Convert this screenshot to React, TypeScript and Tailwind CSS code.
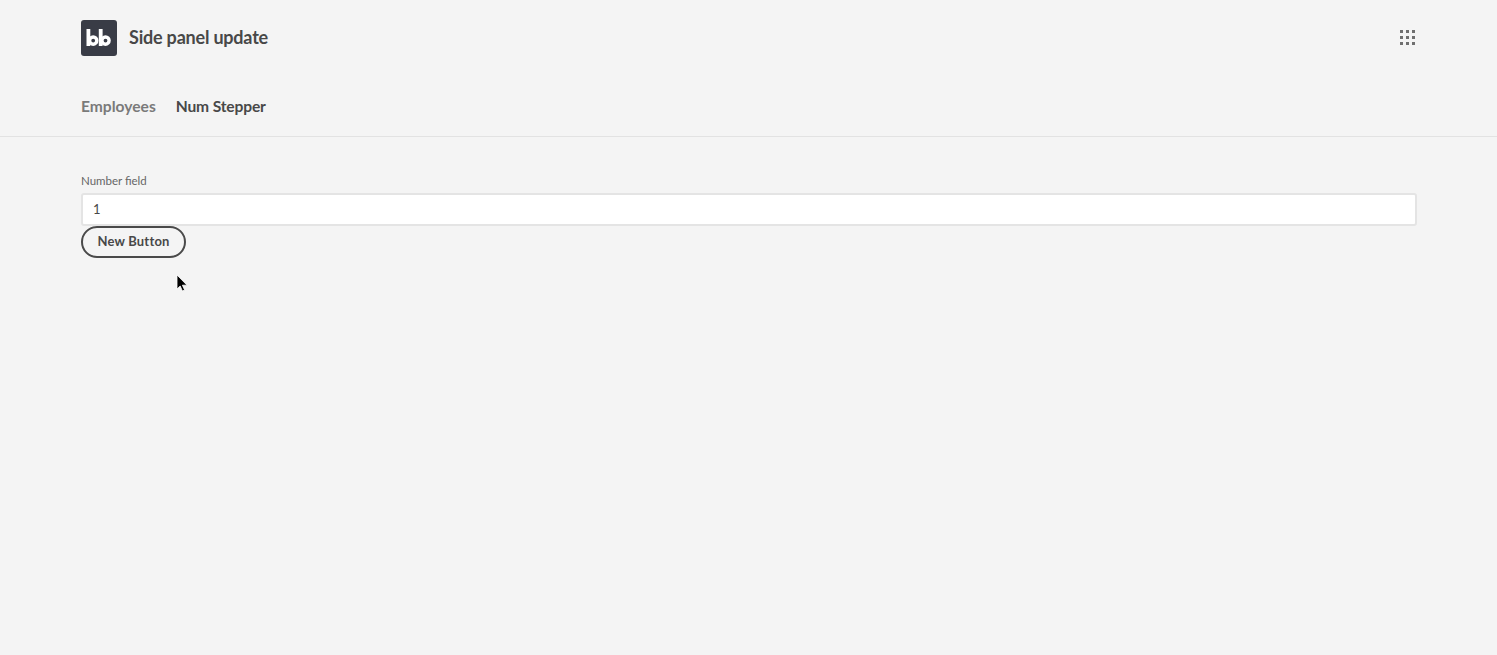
const font = "font-['Lato','Liberation_Sans',sans-serif]";

function Logo() {
  return (
    <div className="w-9 h-9 rounded-[3px] bg-[#393c46] flex items-center justify-center">
      <svg width="26" height="20" viewBox="0 0 26 20" fill="none">
        <rect x="0.5" y="1" width="3.8" height="17" fill="#fff" />
        <circle cx="7.2" cy="12.6" r="3.6" stroke="#fff" strokeWidth="3.4" />
        <rect x="12.8" y="1" width="3.8" height="17" fill="#fff" />
        <circle cx="19.5" cy="12.6" r="3.6" stroke="#fff" strokeWidth="3.4" />
      </svg>
    </div>
  );
}

function Grid() {
  return (
    <div className="grid grid-cols-3 gap-[3px] mb-px">
      {Array.from({ length: 9 }).map((_, i) => (
        <div key={i} className="w-[3px] h-[3px] bg-[#6f6f6f]" />
      ))}
    </div>
  );
}

export default function App() {
  return (
    <div className={`relative min-h-[655px] bg-[#f4f4f4] text-[#484848] ${font}`}>
      <header className="border-b border-[#e2e2e2] h-[137px] px-[81px]">
        <div className="flex items-center justify-between pt-5 pr-[1px]">
          <div className="flex items-center gap-3">
            <Logo />
            <span className="text-[18px] font-bold tracking-[-0.2px] pb-[2px]">Side panel update</span>
          </div>
          <Grid />
        </div>
        <nav className="flex gap-5 mt-[39px] text-[15.6px] font-bold leading-[22px]">
          <span className="text-[#7a7a7a]">Employees</span>
          <span className="tracking-[-0.15px]">Num Stepper</span>
        </nav>
      </header>
      <main className="pr-[80px] pt-[36px] pl-[81px]">
        <label className="block text-[11.5px] leading-[16px] text-[#666666] mb-[4px]">Number field</label>
        <input
          readOnly
          value="1"
          className="block w-full h-[33px] px-[10px] pb-[2px] rounded-[3px] border-2 border-[#e4e4e4] bg-white text-[13px] text-[#484848] outline-none"
        />
        <button className="block h-8 w-[105px] rounded-full border-2 border-[#4a4a4a] text-[13px] font-bold tracking-[0.2px] text-[#484848]">
          New Button
        </button>
      </main>
      <svg className="absolute left-[176px] top-[274px]" width="12" height="19" viewBox="0 0 12 19">
        <path d="M1 1v14l3.2-3 2.2 5 2.2-1-2.2-4.8H11z" fill="#000" stroke="#fff" strokeWidth="0.8" />
      </svg>
    </div>
  );
}
